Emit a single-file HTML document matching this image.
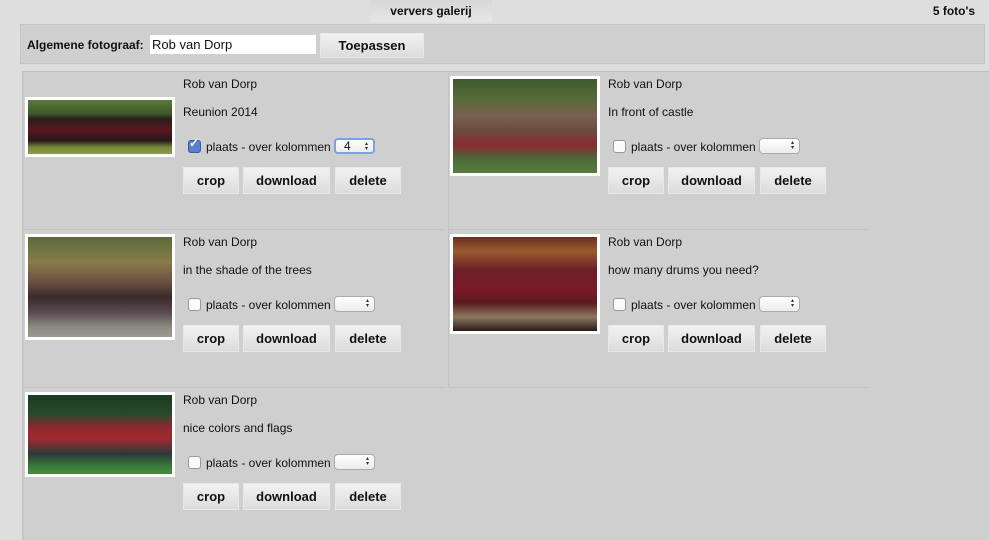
<!DOCTYPE html><html><head><style>
body{margin:0;width:989px;height:539px;background:#dedede;font-family:"Liberation Sans",sans-serif;position:relative;overflow:hidden;font-size:12px;color:#111}
.a{position:absolute}
.btn{position:absolute;height:27px;background:linear-gradient(#f2f2f2,#dcdcdc);border:1px solid #e8e8e8;box-sizing:border-box;font-weight:bold;font-size:13px;text-align:center;line-height:26px;color:#111}
.img{position:absolute;background:#fff;padding:3px;box-sizing:border-box}
.img div{width:100%;height:100%}
.cb{position:absolute;width:11px;height:11px;border:1px solid #999;border-radius:3px;background:#fafafa}
.sel{position:absolute;width:41px;height:16px;border:1px solid #aaa;border-radius:4px;background:linear-gradient(#fff,#ececec);box-sizing:border-box;font-size:12px}
.sel:after{content:"▴\A▾";white-space:pre;position:absolute;right:5px;top:2px;font-size:6px;line-height:5px;color:#333}
</style></head><body>
<div class="a" style="left:370px;top:0;width:122px;height:22px;background:linear-gradient(#d7d7d7,#e6e6e6);font-weight:bold;text-align:center;line-height:22px;font-size:12px">ververs galerij</div>
<div class="a" style="right:14px;top:4px;font-weight:bold;font-size:12px">5 foto's</div>
<div class="a" style="left:20px;top:24px;width:965px;height:40px;background:#cfcfcf;border:1px solid #c4c4c4;box-sizing:border-box"></div>
<div class="a" style="left:27px;top:38px;font-weight:bold;font-size:12px">Algemene fotograaf:</div>
<div class="a" style="left:150px;top:35px;width:166px;height:19px;background:#fff;font-size:13px;line-height:19px;padding-left:2px;box-sizing:border-box">Rob van Dorp</div>
<div class="btn" style="left:320px;top:33px;width:104px;height:25px;line-height:24px">Toepassen</div>
<div class="a" style="left:22px;top:71px;width:967px;height:468px;background:#cfcfcf;border-top:1px solid #c2c2c2;border-left:2px solid #c6c6c6"></div>
<div class="a" style="left:24px;top:229px;width:420px;height:1px;background:#c2c2c2"></div>
<div class="a" style="left:449px;top:229px;width:420px;height:1px;background:#c2c2c2"></div>
<div class="a" style="left:24px;top:387px;width:420px;height:1px;background:#c2c2c2"></div>
<div class="a" style="left:449px;top:387px;width:420px;height:1px;background:#c2c2c2"></div>
<div class="a" style="left:448px;top:73px;width:1px;height:314px;background:#c2c2c2"></div>

<div class="img" style="left:25px;top:97px;width:150px;height:60px"><div style="background:linear-gradient(#5a7a3a 0%,#3d5a2a 25%,#2a1c1c 35%,#5a1820 55%,#241818 75%,#7a8a3c 88%,#8a9a50)"></div></div>
<div class="a" style="left:183px;top:77px">Rob van Dorp</div>
<div class="a" style="left:183px;top:105px">Reunion 2014</div>
<div class="cb" style="left:188px;top:140px;background:#5a7fd0;border-color:#3a5aa0"></div>
<div class="a" style="left:189px;top:136px;color:#fff;font-size:12px;font-weight:bold">✓</div>
<div class="a" style="left:206px;top:140px">plaats - over kolommen</div>
<div class="sel" style="left:334px;top:138px;border:2px solid #7aa3e0;padding-left:8px;line-height:12px">4</div>
<div class="btn" style="left:183px;top:167px;width:56px">crop</div>
<div class="btn" style="left:243px;top:167px;width:87px">download</div>
<div class="btn" style="left:335px;top:167px;width:66px">delete</div>

<div class="img" style="left:450px;top:76px;width:150px;height:100px"><div style="background:linear-gradient(#3d5a2e 0%,#566a3a 20%,#7a6050 40%,#6a4a40 55%,#8a2a30 70%,#4a6a38 85%,#5a7a40)"></div></div>
<div class="a" style="left:608px;top:77px">Rob van Dorp</div>
<div class="a" style="left:608px;top:105px">In front of castle</div>
<div class="cb" style="left:613px;top:140px"></div>
<div class="a" style="left:631px;top:140px">plaats - over kolommen</div>
<div class="sel" style="left:759px;top:138px"></div>
<div class="btn" style="left:608px;top:167px;width:56px">crop</div>
<div class="btn" style="left:668px;top:167px;width:87px">download</div>
<div class="btn" style="left:760px;top:167px;width:66px">delete</div>

<div class="img" style="left:25px;top:234px;width:150px;height:106px"><div style="background:linear-gradient(#5a6a3a 0%,#8a7a4a 25%,#6a5040 45%,#3a2a2a 60%,#5a4a50 75%,#8a8a80 90%,#9a9a90)"></div></div>
<div class="a" style="left:183px;top:235px">Rob van Dorp</div>
<div class="a" style="left:183px;top:263px">in the shade of the trees</div>
<div class="cb" style="left:188px;top:298px"></div>
<div class="a" style="left:206px;top:298px">plaats - over kolommen</div>
<div class="sel" style="left:334px;top:296px"></div>
<div class="btn" style="left:183px;top:325px;width:56px">crop</div>
<div class="btn" style="left:243px;top:325px;width:87px">download</div>
<div class="btn" style="left:335px;top:325px;width:66px">delete</div>

<div class="img" style="left:450px;top:234px;width:150px;height:100px"><div style="background:linear-gradient(#6a3020 0%,#9a5a30 15%,#6a2028 35%,#7a1a28 55%,#5a1a20 70%,#8a7a60 85%,#2a1a18)"></div></div>
<div class="a" style="left:608px;top:235px">Rob van Dorp</div>
<div class="a" style="left:608px;top:263px">how many drums you need?</div>
<div class="cb" style="left:613px;top:298px"></div>
<div class="a" style="left:631px;top:298px">plaats - over kolommen</div>
<div class="sel" style="left:759px;top:296px"></div>
<div class="btn" style="left:608px;top:325px;width:56px">crop</div>
<div class="btn" style="left:668px;top:325px;width:87px">download</div>
<div class="btn" style="left:760px;top:325px;width:66px">delete</div>

<div class="img" style="left:25px;top:392px;width:150px;height:85px"><div style="background:linear-gradient(#1a3a22 0%,#2a4a2a 25%,#8a2a30 40%,#a02a30 55%,#2a3a3a 75%,#3a7a3a 90%,#4a8a40)"></div></div>
<div class="a" style="left:183px;top:393px">Rob van Dorp</div>
<div class="a" style="left:183px;top:421px">nice colors and flags</div>
<div class="cb" style="left:188px;top:456px"></div>
<div class="a" style="left:206px;top:456px">plaats - over kolommen</div>
<div class="sel" style="left:334px;top:454px"></div>
<div class="btn" style="left:183px;top:483px;width:56px">crop</div>
<div class="btn" style="left:243px;top:483px;width:87px">download</div>
<div class="btn" style="left:335px;top:483px;width:66px">delete</div>
</body></html>
